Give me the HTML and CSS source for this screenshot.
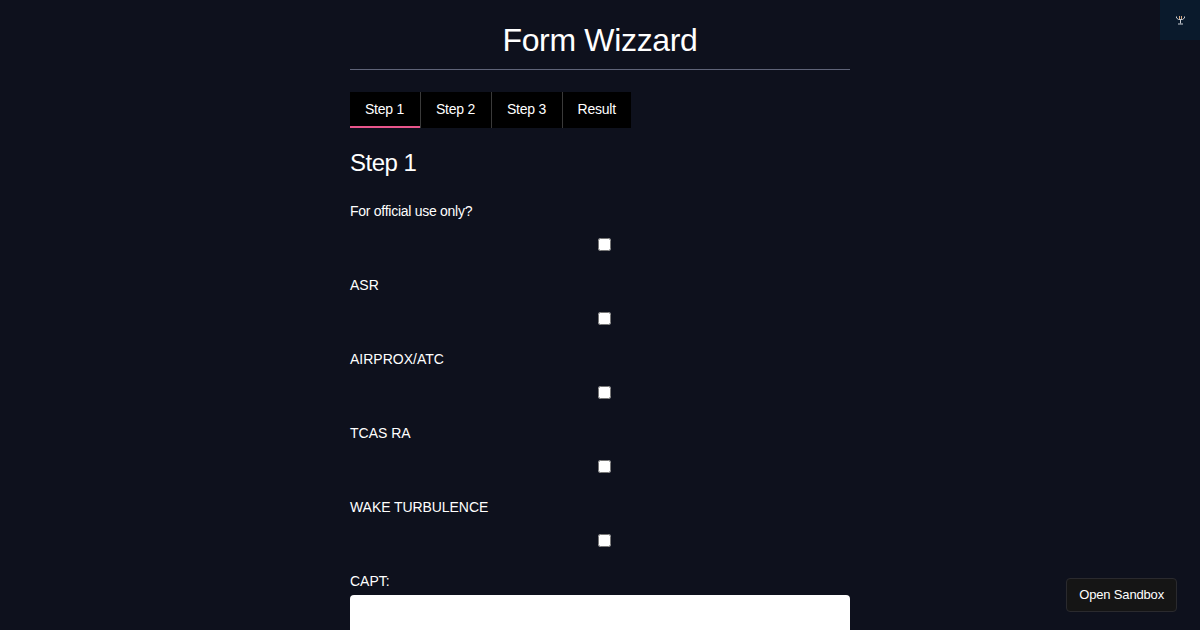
FILE: index.html
```html
<!DOCTYPE html>
<html lang="en">
<head>
    <meta charset="UTF-8">
    <meta name="viewport" content="width=device-width, initial-scale=1.0">
    <title>Form Wizzard</title>
    <link rel="stylesheet" href="styles.css">
</head>
<body>
    <div class="container">
        <h1 class="title">Form Wizzard</h1>

        <div class="tabs">
            <button class="tab active">Step 1</button>
            <button class="tab">Step 2</button>
            <button class="tab">Step 3</button>
            <button class="tab">Result</button>
        </div>

        <h2 class="step-title">Step 1</h2>

        <form>
            <div class="field">
                <label for="official" class="label-tight">For official use only?</label>
                <div class="check"><input type="checkbox" id="official"></div>
            </div>
            <div class="field">
                <label for="asr">ASR</label>
                <div class="check"><input type="checkbox" id="asr"></div>
            </div>
            <div class="field">
                <label for="airprox">AIRPROX/ATC</label>
                <div class="check"><input type="checkbox" id="airprox"></div>
            </div>
            <div class="field">
                <label for="tcas">TCAS RA</label>
                <div class="check"><input type="checkbox" id="tcas"></div>
            </div>
            <div class="field">
                <label for="wake" class="label-wake">WAKE TURBULENCE</label>
                <div class="check"><input type="checkbox" id="wake"></div>
            </div>
            <div class="field">
                <label for="capt">CAPT:</label>
                <input type="text" id="capt" class="text-input">
            </div>
        </form>
    </div>

    <div class="corner-icon">
        <svg width="9" height="9" viewBox="0 0 9 9" fill="none">
            <path d="M0.5 0.5 V2 L2.5 3.5 H6.5 L8.5 2 V0.5" stroke="#c8ccd2" stroke-width="1"/>
            <path d="M3.5 0 V3 M5.5 0 V3" stroke="#d6a880" stroke-width="1"/>
            <path d="M4.5 3.5 V7.5 M2 8 H7" stroke="#c8ccd2" stroke-width="1"/>
        </svg>
    </div>

    <button class="sandbox-btn">Open Sandbox</button>
</body>
</html>
```

FILE: styles.css
```css
html, body {
    height: 100%;
}
body {
    margin: 0;
    overflow: hidden;
    background-color: #0e111d;
    color: #fff;
    font-family: "Liberation Sans", Arial, sans-serif;
    font-size: 14px;
}
.container {
    width: 500px;
    margin: 0 auto;
}
.title {
    margin: 0;
    padding: 22px 0 10px;
    border-bottom: 1px solid #5f6478;
    font-size: 32px;
    font-weight: normal;
    letter-spacing: -0.33px;
    line-height: 37px;
    text-align: center;
}
.tabs {
    display: flex;
    margin-top: 22px;
}
.tab {
    box-sizing: border-box;
    width: 71px;
    height: 36px;
    padding: 0 0 2px 15px;
    border: none;
    border-right: 1px solid #3a3a3a;
    background-color: #000;
    color: #fff;
    font-family: inherit;
    font-size: 14px;
    letter-spacing: -0.22px;
    text-align: left;
}
.tab:last-child {
    width: 68px;
    padding-left: 14.5px;
    border-right: none;
}
.tab.active {
    box-shadow: inset 0 -2px 0 #e8558a;
}
.step-title {
    margin: 21px 0 0;
    font-size: 24px;
    font-weight: normal;
    letter-spacing: -0.5px;
    line-height: 28px;
}
form {
    margin-top: 26px;
}
.field {
    margin-bottom: 16px;
}
.field label {
    display: block;
    line-height: 16px;
}
.field .label-tight {
    letter-spacing: -0.27px;
}
.field .label-wake {
    letter-spacing: -0.07px;
}
.check {
    box-sizing: border-box;
    display: flex;
    justify-content: center;
    align-items: center;
    height: 42px;
    padding: 8px 0 0 8px;
}
.check input {
    margin: 0;
    width: 13px;
    height: 13px;
}
.text-input {
    display: block;
    box-sizing: border-box;
    width: 100%;
    height: 60px;
    margin-top: 6px;
    border: none;
    border-radius: 4px;
    background-color: #fff;
}
.corner-icon {
    position: absolute;
    top: 0;
    right: 0;
    width: 40px;
    height: 40px;
    display: flex;
    align-items: center;
    justify-content: center;
    background-color: #0a1a2c;
}
.sandbox-btn {
    position: absolute;
    right: 23px;
    bottom: 18px;
    height: 34px;
    padding: 0 12px 2px;
    border: 1px solid #2a2a2e;
    border-radius: 4px;
    background-color: #151515;
    color: #fff;
    font-family: inherit;
    font-size: 13px;
    letter-spacing: -0.17px;
}
```
